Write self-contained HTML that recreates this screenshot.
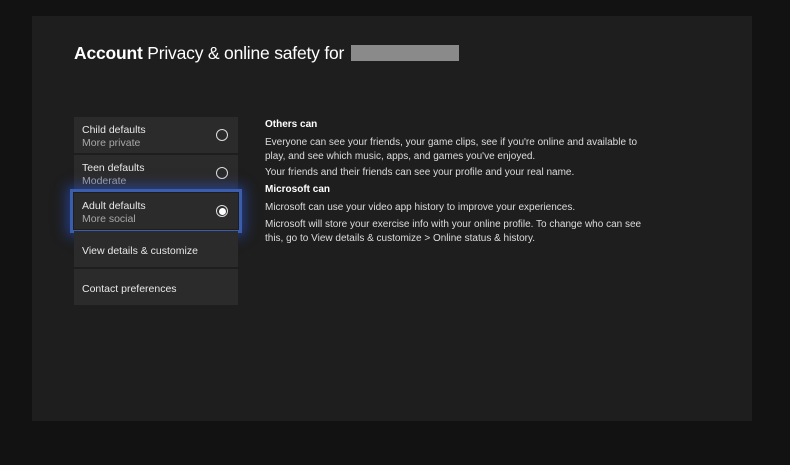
<html><head><style>
body{margin:0;width:790px;height:465px;background:#121212;font-family:"Liberation Sans",sans-serif;position:relative;overflow:hidden}
.p{position:absolute;left:32px;top:16px;width:720px;height:405px;background:#1e1e1e}
.t{position:absolute;left:74px;top:43px;color:#fff;font-size:17.5px;white-space:nowrap;letter-spacing:-0.2px}
.t b{font-weight:bold}
.blur{display:inline-block;width:108px;height:16px;background:#8a8a8a;vertical-align:-2px;margin-left:2px}
.it{position:absolute;left:74px;width:164px;height:36px;background:#2b2b2b;color:#e8e8e8;font-size:10.5px}
.it .a{position:absolute;left:8px;top:7px}
.it .b{position:absolute;left:8px;top:20px;color:#a8a8a8}
.it .c{position:absolute;left:8px;top:14px}
.r{position:absolute;left:142px;top:12px;width:10px;height:10px;border:1.5px solid #ddd;border-radius:50%}
.sel{position:absolute;left:70px;top:189px;width:166px;height:38px;border:3px solid #3a5dae;box-shadow:0 0 12px 3px rgba(40,80,200,.6)}
.x{position:absolute;left:265px;color:#ddd;font-size:10px;line-height:14px;width:385px}
</style></head><body>
<div class="p"></div>
<div class="t"><b>Account</b> Privacy &amp; online safety for <span class="blur"></span></div>
<div class="it" style="top:117px"><div class="a">Child defaults</div><div class="b">More private</div><div class="r"></div></div>
<div class="it" style="top:155px"><div class="a">Teen defaults</div><div class="b">Moderate</div><div class="r"></div></div>
<div class="sel"></div>
<div class="it" style="top:193px"><div class="a">Adult defaults</div><div class="b">More social</div><div class="r"><div style="position:absolute;left:1.5px;top:1.5px;width:7px;height:7px;border-radius:50%;background:#fff"></div></div></div>
<div class="it" style="top:231px"><div class="c">View details &amp; customize</div></div>
<div class="it" style="top:269px"><div class="c">Contact preferences</div></div>
<div class="x" style="top:118px;font-weight:bold;color:#fff">Others can</div>
<div class="x" style="top:136px">Everyone can see your friends, your game clips, see if you're online and available to play, and see which music, apps, and games you've enjoyed.</div>
<div class="x" style="top:166px">Your friends and their friends can see your profile and your real name.</div>
<div class="x" style="top:183px;font-weight:bold;color:#fff">Microsoft can</div>
<div class="x" style="top:201px">Microsoft can use your video app history to improve your experiences.</div>
<div class="x" style="top:218px">Microsoft will store your exercise info with your online profile. To change who can see this, go to View details &amp; customize &gt; Online status &amp; history.</div>
</body></html>
